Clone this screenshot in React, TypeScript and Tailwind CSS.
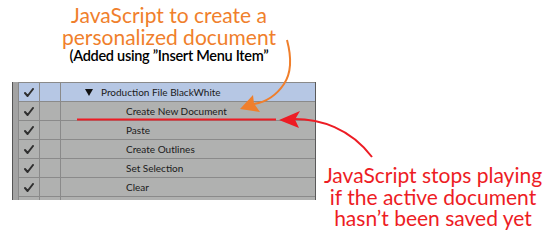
import React from "react";

const Check = () => (
  <svg width="10" height="9" viewBox="0 0 10 9">
    <path d="M1 5 L3.6 8 L9 1" fill="none" stroke="#2f2f2f" strokeWidth="2" strokeLinejoin="round" strokeLinecap="round" />
  </svg>
);

const rows = ["Create New Document", "Paste", "Create Outlines", "Set Selection", "Clear"];

function Row({ header, label }: { header?: boolean; label: string }) {
  return (
    <div className={`flex h-[19px] border-b border-[#8a8a8a] ${header ? "bg-[#b6c7e4]" : "bg-[#b0b1b0]"}`}>
      <div className="w-[21px] border-r border-[#8a8a8a] flex items-center justify-center">
        <Check />
      </div>
      <div className="w-[21px] border-r border-[#8a8a8a]" />
      <div className="flex-1 flex items-center text-[10px] leading-none text-[#1a1a1a]">
        {header ? (
          <>
            <svg className="ml-[24px] mr-[8px]" width="8" height="7" viewBox="0 0 8 7">
              <path d="M0 0 L8 0 L4 7 Z" fill="#111" />
            </svg>
            <span>{label}</span>
          </>
        ) : (
          <span className="ml-[65px]">{label}</span>
        )}
      </div>
    </div>
  );
}

export default function App() {
  return (
    <div className="relative w-[552px] h-[243px] bg-white overflow-hidden" style={{ fontFamily: "Lato, 'Liberation Sans', sans-serif" }}>
      <div className="flex">
        <div className="w-[316px] pl-[12px] flex flex-col">
          <div className="h-[82px] flex flex-col items-center pt-[4px] pl-[10px]">
            <div className="text-[#f07f2c] text-[21px] leading-[22px] text-center">
              <div>JavaScript to create a</div>
              <div>personalized document</div>
            </div>
            <div className="text-[14.5px] leading-[16px] text-black font-semibold tracking-[-0.3px]">(Added using ”Insert Menu Item”</div>
          </div>
          <div className="flex h-[118px] border-l border-[#555] border-r border-r-[#5a5a5a]">
            <div className="w-[6px] bg-[#a3a3a3] border-r border-[#8a8a8a]" />
            <div className="flex-1 border-t border-[#8a8a8a] bg-[#b0b1b0] overflow-hidden">
              <Row header label="Production File BlackWhite" />
              {rows.map((r) => (
                <Row key={r} label={r} />
              ))}
              <div className="flex h-[4px]">
                <div className="w-[21px] border-r border-[#8a8a8a]" />
                <div className="w-[21px] border-r border-[#8a8a8a]" />
              </div>
            </div>
          </div>
        </div>
        <div className="flex-1 flex flex-col pt-[164px]">
          <div className="text-[#ed1c24] text-[21px] leading-[21.5px] text-center pr-[2px]">
            <div>JavaScript stops playing</div>
            <div>if the active document</div>
            <div>hasn’t been saved yet</div>
          </div>
        </div>
      </div>

      <svg className="absolute left-0 top-0 pointer-events-none" width="552" height="243" viewBox="0 0 552 243">
        <line x1="77" y1="119.5" x2="276" y2="119.5" stroke="#ed1c24" strokeWidth="2" />
        <path d="M294 119 C 320 119, 350 128, 372 157" fill="none" stroke="#ed1c24" strokeWidth="2" />
        <path d="M279 120 L300 111 L295 119.5 L299 128 Z" fill="#ed1c24" />
        <path d="M287 40 C 291 55, 292 72, 284 84 C 276 96, 266 102, 254 104" fill="none" stroke="#f07f2c" strokeWidth="2" />
        <path d="M240 109 L253 95 L254 103.5 L260 112 Z" fill="#f07f2c" />
      </svg>
    </div>
  );
}
